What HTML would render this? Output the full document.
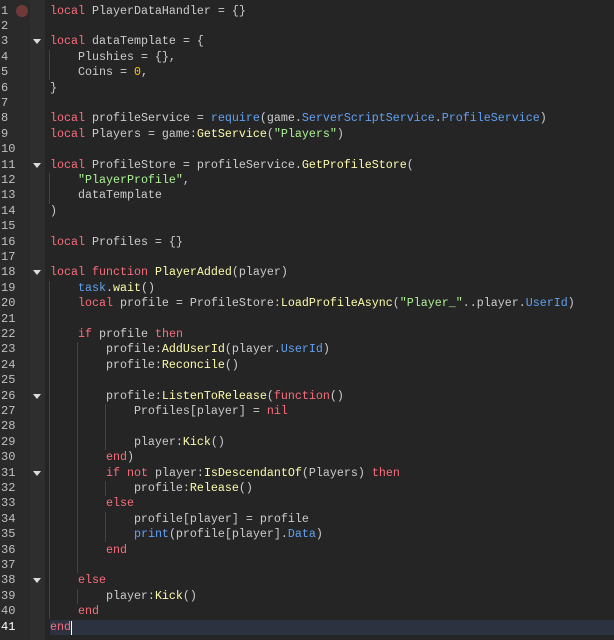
<!DOCTYPE html>
<html><head><meta charset="utf-8"><style>
body{margin:0;width:614px;height:640px;background:#252525;overflow:hidden;position:relative;font-family:"Liberation Mono",monospace;font-size:11.67px}
#gut{position:absolute;left:0;top:0;width:30px;height:640px;background:#2a2a2a}
#fold{position:absolute;left:30px;top:0;width:15px;height:640px;background:#2e2e2e}
.ln{position:absolute;left:0;width:30px;text-align:left;padding-left:1px;color:#c0c0c0;height:15.4px;line-height:15.4px;font-size:12px}
.code{position:absolute;left:50px;white-space:pre;color:#cccccc;height:15.4px;line-height:15.4px}
.k{color:#f86d7c}.f{color:#fdfbac}.s{color:#adf195}.n{color:#ffc600}.b{color:#61a1f1}
.tri{position:absolute;left:33px;width:0;height:0;border-left:4px solid transparent;border-right:4px solid transparent;border-top:5px solid #ddd}
.g{position:absolute;width:1px;background:#444}
#cur{position:absolute;left:50px;top:620px;width:564px;height:15px;background:#2d3241}
</style></head><body>
<div id="gut"></div><div id="fold"></div><div id="cur"></div>
<div style="position:absolute;left:16px;top:5px;width:12px;height:12px;border-radius:50%;background:#6e3a3a"></div>
<div id="lines"></div>
<script>
const L=[
'<span class=k>local</span> PlayerDataHandler = {}',
'',
'<span class=k>local</span> dataTemplate = {',
'    Plushies = {},',
'    Coins = <span class=n>0</span>,',
'}',
'',
'<span class=k>local</span> profileService = <span class=b>require</span>(game.<span class=b>ServerScriptService</span>.<span class=b>ProfileService</span>)',
'<span class=k>local</span> Players = game:<span class=f>GetService</span>(<span class=s>"Players"</span>)',
'',
'<span class=k>local</span> ProfileStore = profileService.<span class=f>GetProfileStore</span>(',
'    <span class=s>"PlayerProfile"</span>,',
'    dataTemplate',
')',
'',
'<span class=k>local</span> Profiles = {}',
'',
'<span class=k>local</span> <span class=k>function</span> <span class=f>PlayerAdded</span>(player)',
'    <span class=b>task</span>.<span class=f>wait</span>()',
'    <span class=k>local</span> profile = ProfileStore:<span class=f>LoadProfileAsync</span>(<span class=s>"Player_"</span>..player.<span class=b>UserId</span>)',
'',
'    <span class=k>if</span> profile <span class=k>then</span>',
'        profile:<span class=f>AddUserId</span>(player.<span class=b>UserId</span>)',
'        profile:<span class=f>Reconcile</span>()',
'',
'        profile:<span class=f>ListenToRelease</span>(<span class=k>function</span>()',
'            Profiles[player] = <span class=k>nil</span>',
'',
'            player:<span class=f>Kick</span>()',
'        <span class=k>end</span>)',
'        <span class=k>if</span> <span class=k>not</span> player:<span class=f>IsDescendantOf</span>(Players) <span class=k>then</span>',
'            profile:<span class=f>Release</span>()',
'        <span class=k>else</span>',
'            profile[player] = profile',
'            <span class=b>print</span>(profile[player].<span class=b>Data</span>)',
'        <span class=k>end</span>',
'',
'    <span class=k>else</span>',
'        player:<span class=f>Kick</span>()',
'    <span class=k>end</span>',
'<span class=k>end</span>'];
const folds=[3,11,18,26,31,38];
let h='';const lh=15.4,t0=3.5;
L.forEach((c,i)=>{const y=t0+i*lh;
h+=`<div class=ln style="top:${y}px;${i==40?'color:#fff':''}">${i+1}</div><div class=code style="top:${y}px">${c}</div>`;
if(folds.includes(i+1))h+=`<div class=tri style="top:${y+5}px"></div>`;});
[[49,4,5],[49,19,40],[77,23,37],[105,27,29],[105,32,32],[105,34,35],[77,39,39],[49,12,13]].forEach(g=>{
h+=`<div class=g style="left:${g[0]}px;top:${t0+(g[1]-1)*lh}px;height:${(g[2]-g[1]+1)*lh}px"></div>`;});
h+=`<div style="position:absolute;left:71px;top:621px;width:1px;height:14px;background:#fff"></div>`;
document.getElementById('lines').innerHTML=h;
</script>
</body></html>
